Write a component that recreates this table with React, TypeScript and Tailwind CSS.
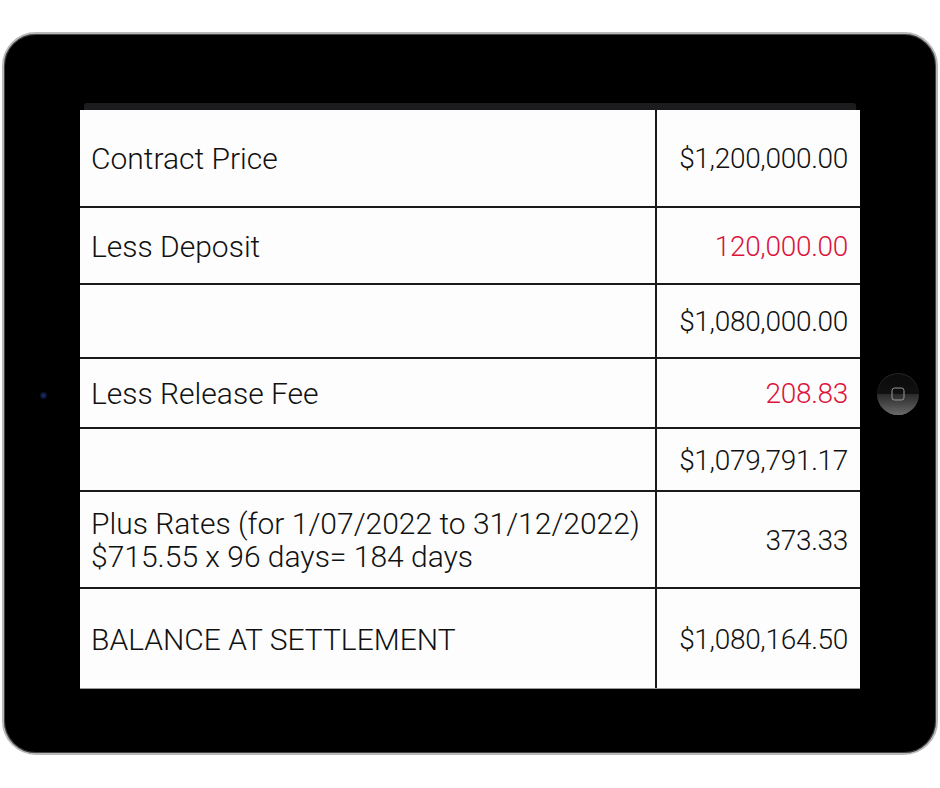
import React from "react";

type Row = {
  label?: string[];
  amount: string;
  red?: boolean;
  h: string;
};

const rows: Row[] = [
  { label: ["Contract Price"], amount: "$1,200,000.00", h: "h-[98px]" },
  { label: ["Less Deposit"], amount: "120,000.00", red: true, h: "h-[77px]" },
  { amount: "$1,080,000.00", h: "h-[74px]" },
  { label: ["Less Release Fee"], amount: "208.83", red: true, h: "h-[70px]" },
  { amount: "$1,079,791.17", h: "h-[63px]" },
  {
    label: ["Plus Rates (for 1/07/2022 to 31/12/2022)", "$715.55 x 96 days= 184 days"],
    amount: "373.33",
    h: "h-[97px]",
  },
  { label: ["BALANCE AT SETTLEMENT"], amount: "$1,080,164.50", h: "h-[99px]" },
];

function HomeButton() {
  return (
    <div className="relative w-[42px] h-[42px] rounded-full overflow-hidden bg-gradient-to-b from-[#0a0a0a] via-[#111] to-[#5a5a5a] shadow-[inset_0_1px_1px_rgba(255,255,255,0.12)]">
      <div className="absolute left-0 right-0 bottom-0 h-1/2 bg-gradient-to-b from-[#2a2a2a] to-[#6a6a6a]" />
      <div className="absolute left-1/2 top-1/2 -translate-x-1/2 -translate-y-1/2 w-[13px] h-[13px] rounded-[3px] border-[1.5px] border-[#9a9a9a]" />
    </div>
  );
}

export default function App() {
  return (
    <div className="w-[940px] h-[788px] bg-white pt-[32px] pl-[2px]">
      <div className="w-[936px] h-[723px] rounded-[34px] border-2 border-[#b8b8b8] bg-black shadow-[inset_0_0_0_1px_#444] flex">
        {/* left bezel with camera */}
        <div className="w-[76px] pt-[69px] flex">
          <div className="h-[585px] w-full flex items-center justify-center pl-[2px]">
            <div className="w-[7px] h-[7px] rounded-full bg-[radial-gradient(circle,#1d2f78_0%,#0c1230_60%,#050505_100%)]" />
          </div>
        </div>

        {/* screen */}
        <div className="w-[780px] pt-[69px] flex flex-col">
          <div className="mx-[4px] h-[7px] rounded-t-[3px] bg-[#1c1c1e]" />
          <div
            className="bg-[#fdfdfd] border-b border-[#9a9a9a] text-[#111] text-[30px] leading-[33px] font-light"
            style={{ fontFamily: "Roboto, 'Liberation Sans', sans-serif" }}
          >
            {rows.map((r, i) => (
              <div
                key={i}
                className={`flex ${r.h} ${i < rows.length - 1 ? "border-b-2 border-[#1a1a1a]" : ""}`}
              >
                <div className="w-[577px] border-r-2 border-[#1a1a1a] pl-[11px] pt-[1px] flex flex-col justify-center">
                  {r.label?.map((l) => (
                    <div key={l}>{l}</div>
                  ))}
                </div>
                <div
                  className={`flex-1 pr-[12px] pt-[1px] flex items-center justify-end text-[28px] tracking-[-0.3px] ${
                    r.red ? "text-[#dc143c]" : ""
                  }`}
                >
                  {r.amount}
                </div>
              </div>
            ))}
          </div>
        </div>

        {/* right bezel with home button */}
        <div className="flex-1 pt-[69px] flex">
          <div className="h-[585px] w-full flex items-center justify-center pb-[4px]">
            <HomeButton />
          </div>
        </div>
      </div>
    </div>
  );
}
